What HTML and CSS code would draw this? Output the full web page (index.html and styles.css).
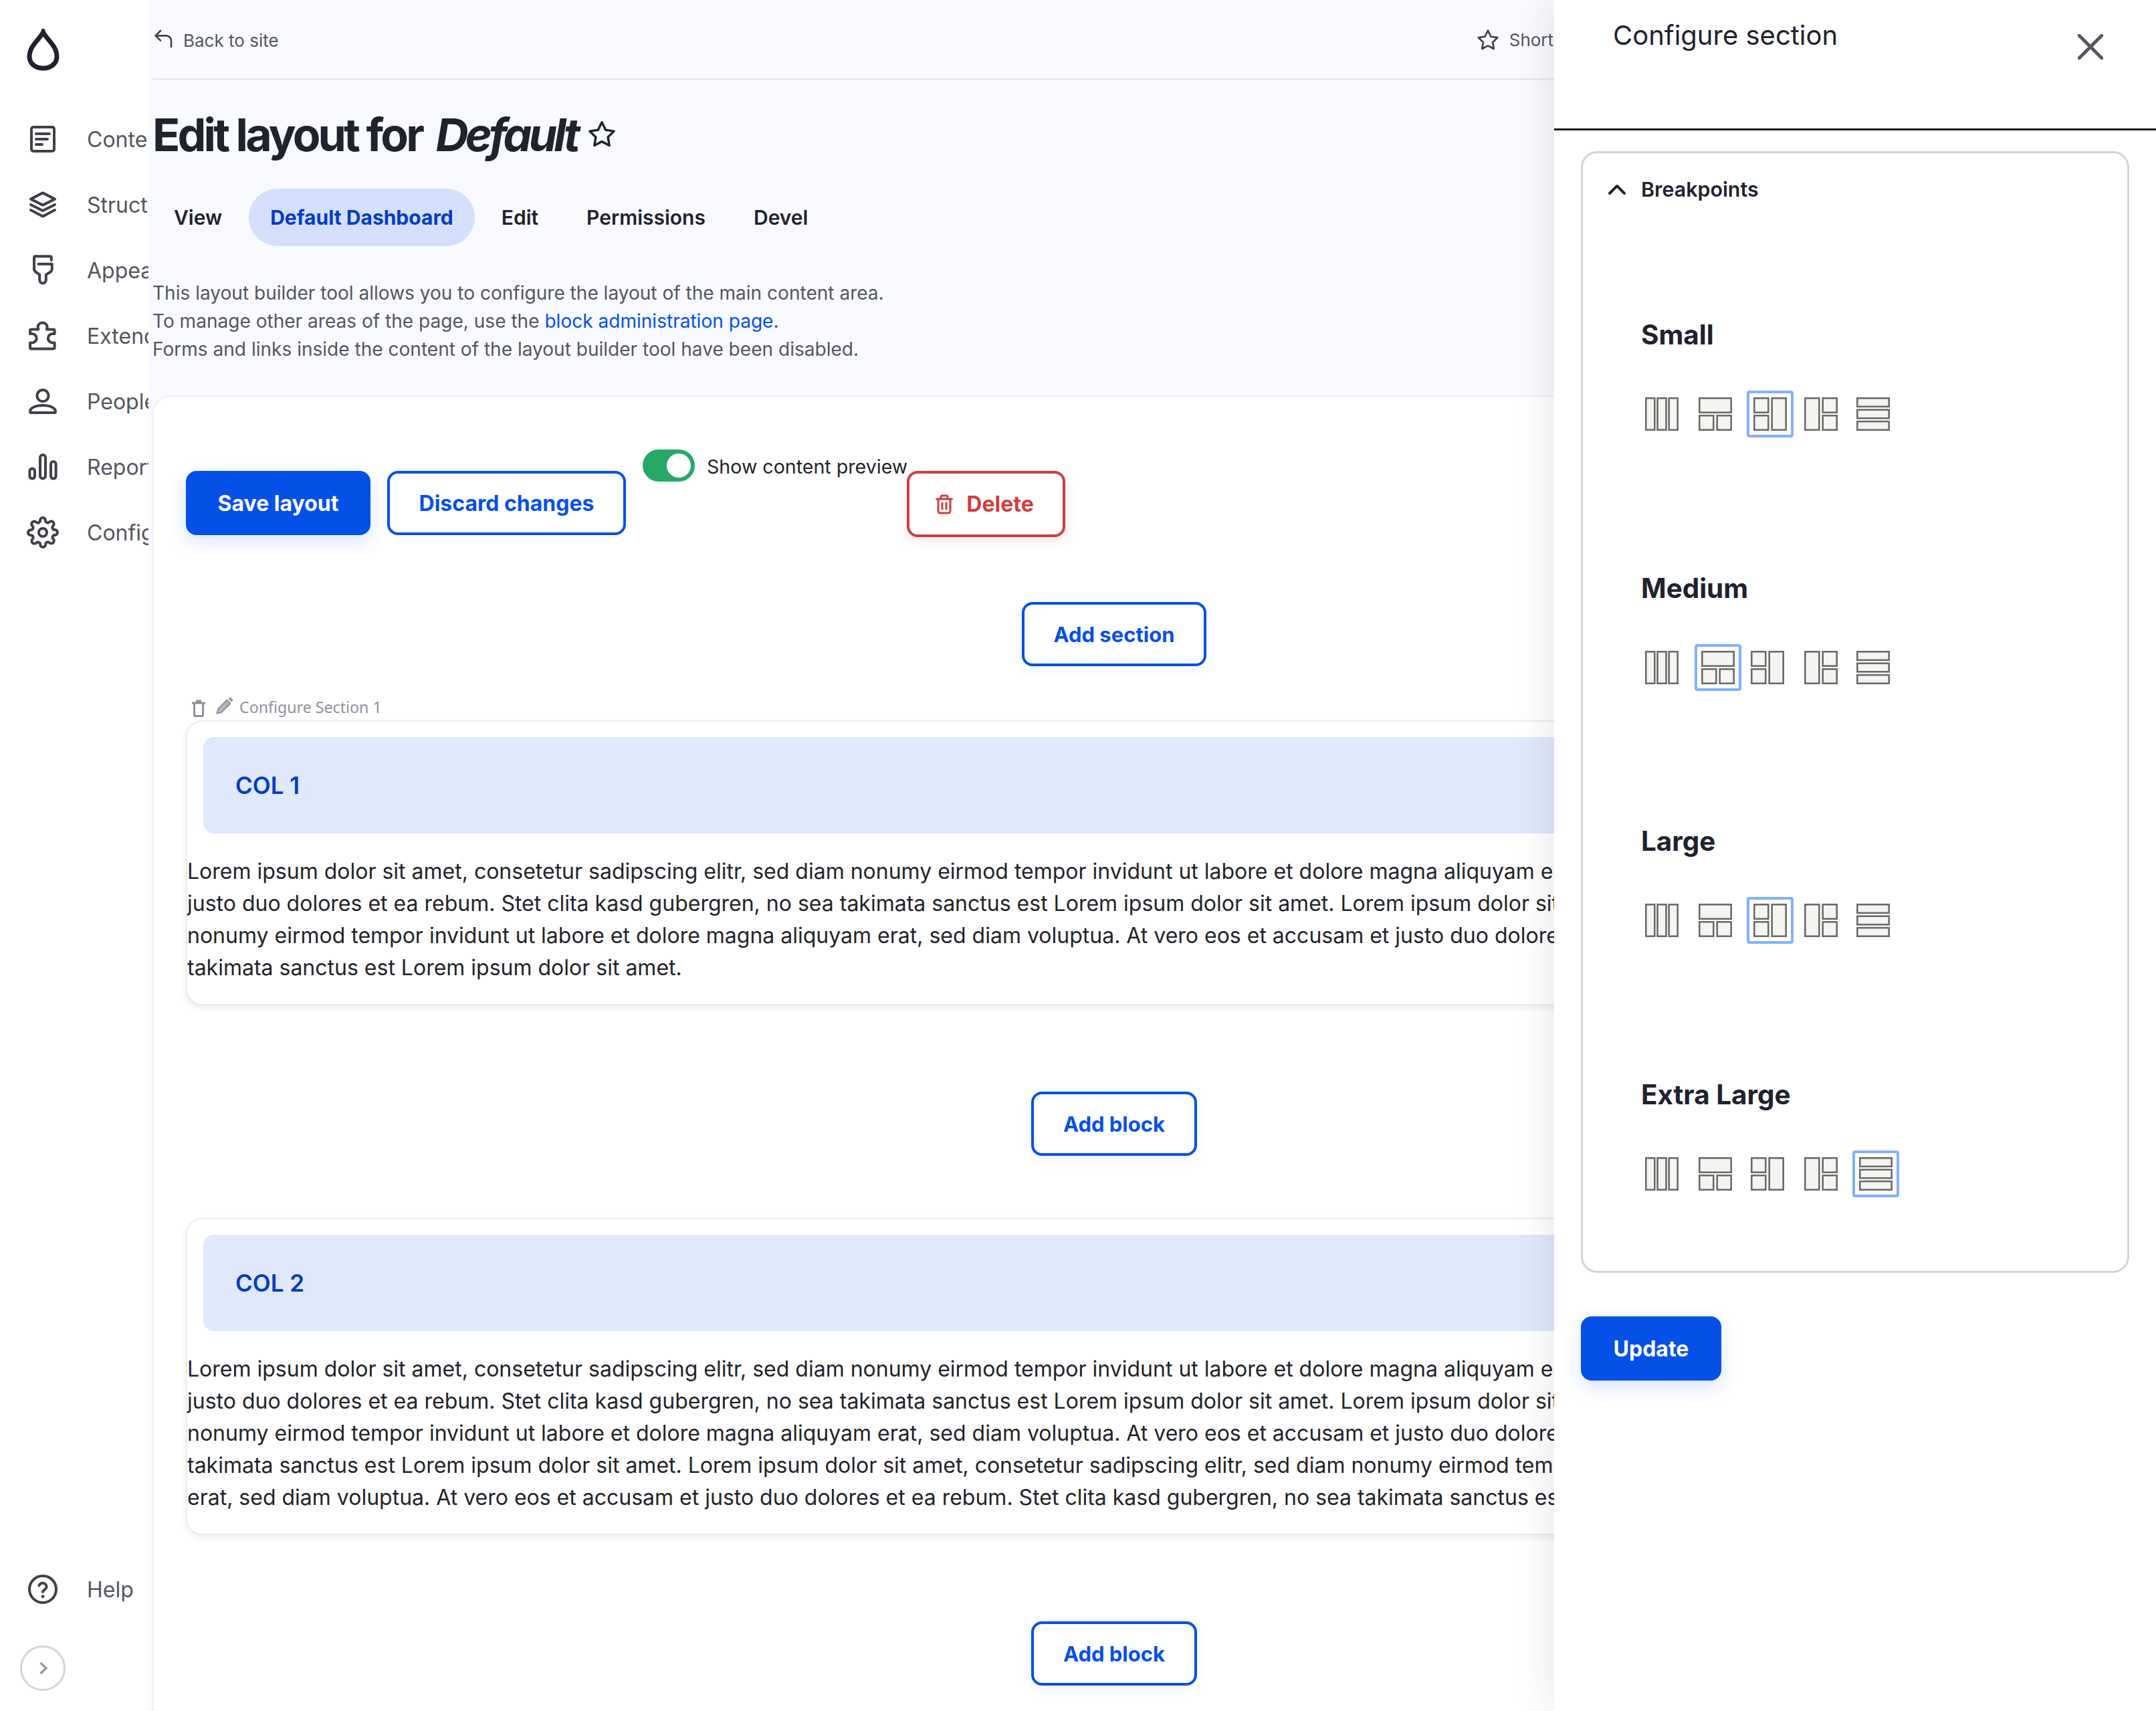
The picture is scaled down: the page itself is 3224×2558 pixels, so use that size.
FILE: index.html
```html
<!DOCTYPE html>
<html lang="en">
<head>
<meta charset="utf-8">
<title>Edit layout for Default</title>
<link rel="stylesheet" href="styles.css">
</head>
<body>
<svg class="defs" aria-hidden="true">
  <symbol id="l1" viewBox="0 0 50 50"><rect x="1.3" y="1.3" width="13" height="47.4"/><rect x="18.5" y="1.3" width="13" height="47.4"/><rect x="35.7" y="1.3" width="13" height="47.4"/></symbol>
  <symbol id="l2" viewBox="0 0 50 50"><rect x="1.3" y="1.3" width="47.4" height="21.4"/><rect x="1.3" y="27.3" width="21" height="21.4"/><rect x="27.7" y="27.3" width="21" height="21.4"/></symbol>
  <symbol id="l3" viewBox="0 0 50 50"><rect x="1.3" y="1.3" width="21" height="21.4"/><rect x="1.3" y="27.3" width="21" height="21.4"/><rect x="27.7" y="1.3" width="21" height="47.4"/></symbol>
  <symbol id="l4" viewBox="0 0 50 50"><rect x="1.3" y="1.3" width="21" height="47.4"/><rect x="27.7" y="1.3" width="21" height="21.4"/><rect x="27.7" y="27.3" width="21" height="21.4"/></symbol>
  <symbol id="l5" viewBox="0 0 50 50"><rect x="1.3" y="1.3" width="47.4" height="12.6"/><rect x="1.3" y="18.7" width="47.4" height="12.6"/><rect x="1.3" y="36.1" width="47.4" height="12.6"/></symbol>
</svg>
<div class="app">
  <aside class="sidebar">
    <svg class="logo" viewBox="0 0 49 63"><path d="M24.5 5C21 14 4 25 4 41.500C4 52 13 59 24.500 59S45 52 45 41.500C45 25 28 14 24.500 5Z"/></svg>
    <nav class="nav">
      <a class="nav-item"><svg class="nav-icon" viewBox="0 0 24 24"><rect x="3.500" y="3" width="17" height="18" rx="1.500"/><path d="M7 8h10M7 12h8.500M7 16h4.500"/></svg><span>Content</span></a>
      <a class="nav-item"><svg class="nav-icon" viewBox="0 0 24 24"><path d="M12 3.200 21 7.800 12 12.300 3 7.800ZM3 12l9 4.500 9-4.500M3 16l9 4.800 9-4.800"/></svg><span>Structure</span></a>
      <a class="nav-item"><svg class="nav-icon" viewBox="0 0 24 24"><path d="M18.400 4.500V2.600Q18.400 1.600 17.400 1.600H6.500Q5.500 1.600 5.500 2.600V11Q5.500 12.500 7 13.500L9.600 15.300V19.300a2.400 2.400 0 0 0 4.800 0V15.300L17.400 13.500Q18.900 12.500 18.900 11V7.400H8.700"/></svg><span>Appearance</span></a>
      <a class="nav-item"><svg class="nav-icon" viewBox="0 0 24 24"><path d="M3.500 7.200H8.500C9 7.200 8.300 6.200 8.300 5.500C8.300 3.500 10 2.200 11.800 2.200C13.600 2.200 15.300 3.500 15.300 5.500C15.300 6.200 14.600 7.200 15.100 7.200H19.800a1 1 0 0 1 1 1V10.500H19.300a3.300 3.300 0 0 0 0 6.700H20.800V20.800a1 1 0 0 1-1 1H3.500a1 1 0 0 1-1-1V17.200H4a3.300 3.300 0 0 0 0-6.700H2.500V8.200a1 1 0 0 1 1-1Z"/></svg><span>Extend</span></a>
      <a class="nav-item"><svg class="nav-icon" viewBox="0 0 24 24"><circle cx="12" cy="7.800" r="4.300"/><path d="M2.500 19.700c0-3 4.300-4.700 9.500-4.700s9.500 1.700 9.500 4.700c0 .6-.4.800-1 .8h-17c-.6 0-1-.2-1-.8Z"/></svg><span>People</span></a>
      <a class="nav-item"><svg class="nav-icon" viewBox="0 0 24 24"><rect x="2.200" y="13.200" width="3.800" height="7.600" rx="1.900"/><rect x="10" y="3" width="4" height="17.800" rx="2"/><rect x="18" y="8" width="3.800" height="12.800" rx="1.900"/></svg><span>Reports</span></a>
      <a class="nav-item"><svg class="nav-icon" viewBox="0 0 24 24"><path d="M12 15a3 3 0 1 0 0-6 3 3 0 0 0 0 6z"/><path d="M19.400 15a1.650 1.650 0 0 0 .33 1.820l.06.06a2 2 0 0 1 0 2.830 2 2 0 0 1-2.830 0l-.06-.06a1.650 1.650 0 0 0-1.820-.33 1.650 1.650 0 0 0-1 1.510V21a2 2 0 0 1-2 2 2 2 0 0 1-2-2v-.09A1.650 1.650 0 0 0 9 19.400a1.650 1.650 0 0 0-1.820.33l-.06.06a2 2 0 0 1-2.830 0 2 2 0 0 1 0-2.830l.06-.06a1.650 1.650 0 0 0 .33-1.820 1.650 1.650 0 0 0-1.510-1H3a2 2 0 0 1-2-2 2 2 0 0 1 2-2h.09A1.650 1.650 0 0 0 4.600 9a1.650 1.650 0 0 0-.33-1.820l-.06-.06a2 2 0 0 1 0-2.830 2 2 0 0 1 2.830 0l.06.06a1.650 1.650 0 0 0 1.820.33H9a1.650 1.650 0 0 0 1-1.510V3a2 2 0 0 1 2-2 2 2 0 0 1 2 2v.09a1.650 1.650 0 0 0 1 1.510 1.650 1.650 0 0 0 1.820-.33l.06-.06a2 2 0 0 1 2.830 0 2 2 0 0 1 0 2.830l-.06.06a1.650 1.650 0 0 0-.33 1.820V9a1.650 1.650 0 0 0 1.510 1H21a2 2 0 0 1 2 2 2 2 0 0 1-2 2h-.09a1.650 1.650 0 0 0-1.510 1z"/></svg><span>Configuration</span></a>
    </nav>
    <a class="nav-item help"><svg class="nav-icon" viewBox="0 0 24 24"><circle cx="12" cy="12" r="10"/><path d="M9.200 9.200a2.900 2.900 0 0 1 5.600 1c0 1.900-2.800 2.400-2.800 3.800"/><path class="dot" d="M12 17.400h.01"/></svg><span>Help</span></a>
    <button class="collapse"><svg viewBox="0 0 24 24"><path d="M8.500 4 17 12l-8.500 8"/></svg></button>
  </aside>

  <main class="main">
    <header class="topbar">
      <a class="top-link"><svg class="back-icon" viewBox="0 0 24 24"><path d="M9 14 3.500 8.500 9 3"/><path d="M21 21v-7a5.500 5.500 0 0 0-5.500-5.500h-12"/></svg>Back to site</a>
      <a class="top-link shortcuts"><svg class="short-icon" viewBox="0 0 24 24"><path d="M12 2.500l2.940 6 6.560.96-4.750 4.640 1.120 6.540L12 17.550l-5.870 3.090 1.120-6.540-4.750-4.640 6.560-.96Z"/></svg>Shortcuts</a>
    </header>
    <h1 class="page-title">Edit layout for <em>Default</em><svg class="title-star" viewBox="0 0 24 24"><path d="M12 2.500l2.940 6 6.560.96-4.750 4.640 1.120 6.540L12 17.550l-5.870 3.090 1.120-6.540-4.750-4.640 6.560-.96Z"/></svg></h1>
    <ul class="tabs">
      <li class="tab">View</li>
      <li class="tab active">Default Dashboard</li>
      <li class="tab">Edit</li>
      <li class="tab">Permissions</li>
      <li class="tab">Devel</li>
    </ul>
    <div class="intro">
      <p>This layout builder tool allows you to configure the layout of the main content area.</p>
      <p>To manage other areas of the page, use the <a>block administration page</a>.</p>
      <p>Forms and links inside the content of the layout builder tool have been disabled.</p>
    </div>

    <section class="canvas">
      <div class="actions">
        <button class="btn primary save">Save layout</button>
        <button class="btn outline discard">Discard changes</button>
        <span class="toggle"><span class="knob"></span></span>
        <span class="toggle-label">Show content preview</span>
        <button class="btn danger"><svg class="del-icon" viewBox="0 0 26 30"><path d="M1.500 7h23M8 6V4a2 2 0 0 1 2-2h6a2 2 0 0 1 2 2V6M4 7V25a3 3 0 0 0 3 3h12a3 3 0 0 0 3-3V7M10 13v9M16 13v9"/></svg>Delete</button>
      </div>
      <div class="add-row section-add"><button class="btn outline add add-section">Add section</button></div>
      <div class="section-tools">
        <svg class="tool-trash" viewBox="0 0 20 26"><path d="M0 5h20M6 2h8M3.500 5v18a1.500 1.500 0 0 0 1.500 1.500h10a1.500 1.500 0 0 0 1.500-1.500V5"/></svg>
        <svg class="tool-pencil" viewBox="0 0 26 26"><path class="pencil-body" d="M1.500 24.500l1.500-6.500L16.500 4.500l5 5L8 23Z"/><path class="pencil-cap" d="M18.500 2.500 20.500.800a1 1 0 0 1 1.300 0l3.400 3.400a1 1 0 0 1 0 1.300L23.500 7.500Z"/></svg>
        <span>Configure Section 1</span>
      </div>
      <article class="block">
        <h2 class="block-title">COL 1</h2>
        <p class="lorem">Lorem ipsum dolor sit amet, consetetur sadipscing elitr, sed diam nonumy eirmod tempor invidunt ut labore et dolore magna aliquyam erat, sed diam voluptua. At vero eos et accusam et justo duo dolores et ea rebum. Stet clita kasd gubergren, no sea takimata sanctus est Lorem ipsum dolor sit amet. Lorem ipsum dolor sit amet, consetetur sadipscing elitr, sed diam nonumy eirmod tempor invidunt ut labore et dolore magna aliquyam erat, sed diam voluptua. At vero eos et accusam et justo duo dolores et ea rebum. Stet clita kasd gubergren, no sea takimata sanctus est Lorem ipsum dolor sit amet.</p>
      </article>
      <div class="add-row block-add"><button class="btn outline add add-block">Add block</button></div>
      <article class="block second">
        <h2 class="block-title">COL 2</h2>
        <p class="lorem">Lorem ipsum dolor sit amet, consetetur sadipscing elitr, sed diam nonumy eirmod tempor invidunt ut labore et dolore magna aliquyam erat, sed diam voluptua. At vero eos et accusam et justo duo dolores et ea rebum. Stet clita kasd gubergren, no sea takimata sanctus est Lorem ipsum dolor sit amet. Lorem ipsum dolor sit amet, consetetur sadipscing elitr, sed diam nonumy eirmod tempor invidunt ut labore et dolore magna aliquyam erat, sed diam voluptua. At vero eos et accusam et justo duo dolores et ea rebum. Stet clita kasd gubergren, no sea takimata sanctus est Lorem ipsum dolor sit amet. Lorem ipsum dolor sit amet, consetetur sadipscing elitr, sed diam nonumy eirmod tempor invidunt ut labore et dolore magna aliquyam erat, sed diam voluptua. At vero eos et accusam et justo duo dolores et ea rebum. Stet clita kasd gubergren, no sea takimata sanctus est Lorem ipsum dolor sit amet.</p>
      </article>
      <div class="add-row last-add"><button class="btn outline add add-block">Add block</button></div>
    </section>
  </main>

  <aside class="panel">
    <header class="panel-head">
      <h2>Configure section</h2>
      <svg class="close" viewBox="0 0 38 38"><path d="M2 2l34 34M36 2 2 36"/></svg>
    </header>
    <div class="details">
      <div class="summary"><svg class="chev" viewBox="0 0 26 16"><path d="M2 14 13 3l11 11"/></svg>Breakpoints</div>
      <div class="bp-list">
        <div class="bp">
          <h3>Small</h3>
          <div class="layouts">
            <span class="lay"><svg><use href="#l1"/></svg></span>
            <span class="lay"><svg><use href="#l2"/></svg></span>
            <span class="lay sel"><svg><use href="#l3"/></svg></span>
            <span class="lay"><svg><use href="#l4"/></svg></span>
            <span class="lay"><svg><use href="#l5"/></svg></span>
          </div>
        </div>
        <div class="bp">
          <h3>Medium</h3>
          <div class="layouts">
            <span class="lay"><svg><use href="#l1"/></svg></span>
            <span class="lay sel"><svg><use href="#l2"/></svg></span>
            <span class="lay"><svg><use href="#l3"/></svg></span>
            <span class="lay"><svg><use href="#l4"/></svg></span>
            <span class="lay"><svg><use href="#l5"/></svg></span>
          </div>
        </div>
        <div class="bp">
          <h3>Large</h3>
          <div class="layouts">
            <span class="lay"><svg><use href="#l1"/></svg></span>
            <span class="lay"><svg><use href="#l2"/></svg></span>
            <span class="lay sel"><svg><use href="#l3"/></svg></span>
            <span class="lay"><svg><use href="#l4"/></svg></span>
            <span class="lay"><svg><use href="#l5"/></svg></span>
          </div>
        </div>
        <div class="bp">
          <h3>Extra Large</h3>
          <div class="layouts">
            <span class="lay"><svg><use href="#l1"/></svg></span>
            <span class="lay"><svg><use href="#l2"/></svg></span>
            <span class="lay"><svg><use href="#l3"/></svg></span>
            <span class="lay"><svg><use href="#l4"/></svg></span>
            <span class="lay sel"><svg><use href="#l5"/></svg></span>
          </div>
        </div>
      </div>
    </div>
    <button class="btn primary update">Update</button>
  </aside>
</div>
</body>
</html>
```
FILE: styles.css
```css
* { box-sizing: border-box; }
html, body { margin: 0; padding: 0; }
body {
  font-family: Inter, "Liberation Sans", sans-serif;
  color: #20222e;
  background: #fff;
}
h1, h2, h3, p, ul { margin: 0; padding: 0; }
ul { list-style: none; }
.defs { display: none; }
.app { display: flex; width: 3224px; height: 2558px; overflow: hidden; }

/* sidebar */
.sidebar {
  flex: none; width: 222px; height: 100%;
  display: flex; flex-direction: column;
  background: #fff; overflow: hidden; position: relative; z-index: 1;
}
.logo { display: block; width: 49px; height: 63px; margin: 43px 0 0 40px; flex: none; }
.logo path { fill: none; stroke: #20222e; stroke-width: 7; }
.nav { margin-top: 53px; }
.nav-item {
  display: flex; align-items: center; height: 98px;
  font-size: 32px; color: #55565f; white-space: nowrap;
}
.nav-icon {
  flex: none; width: 48px; height: 48px; margin: 0 42px 0 40px;
  fill: none; stroke: #3f4048; stroke-width: 2; stroke-linecap: round; stroke-linejoin: round;
}
.nav-icon .dot { stroke-width: 2.400; }
.help { margin-top: auto; }
.collapse {
  width: 68px; height: 68px; margin: 35px 0 30px 30px; padding: 0;
  border: 3px solid #d3d4d9; border-radius: 50%; background: #fff;
  display: flex; align-items: center; justify-content: center; flex: none;
}
.collapse svg { width: 24px; height: 24px; fill: none; stroke: #9a9a9a; stroke-width: 3.500; }

/* main */
.main { flex: none; width: 2102px; height: 100%; background: #f9faff; padding-left: 6px; overflow: hidden; }
.topbar {
  height: 120px; border-bottom: 3px solid #e6e7ec;
  display: flex; justify-content: space-between;
}
.top-link { display: flex; align-items: center; padding-top: 4px; font-size: 26px; color: #55565f; white-space: nowrap; }
.back-icon { width: 32px; height: 32px; margin: -6px 14px 0 0; fill: none; stroke: #3f4048; stroke-width: 2; stroke-linecap: round; stroke-linejoin: round; }
.shortcuts { margin-right: -51px; margin-top: -2px; }
.short-icon { width: 36px; height: 36px; margin-right: 14px; fill: none; stroke: #3f4048; stroke-width: 1.800; stroke-linejoin: round; }
.page-title {
  display: flex; align-items: center; height: 84px; margin-top: 38px; padding-top: 1px;
  font-size: 68px; font-weight: 650; letter-spacing: -3.800px; white-space: pre;
  color: #20222e;
}
.page-title em { font-style: italic; margin-left: 8px; letter-spacing: -4.800px; }
.title-star { width: 46px; height: 46px; margin-left: 14px; fill: none; stroke: #20222e; stroke-width: 1.800; stroke-linejoin: round; }
.tabs { display: flex; gap: 8px; margin: 40px 0 0; }
.tab {
  height: 86px; padding: 0 32px; border-radius: 43px;
  display: flex; align-items: center;
  font-size: 30px; font-weight: 600; color: #20222e; white-space: nowrap;
}
.tab.active { background: #d3dffb; color: #003cc5; font-weight: 700; }
.intro { margin-top: 49px; font-size: 28.050px; line-height: 42px; color: #55565f; }
.intro a { color: #0550e6; }

/* canvas */
.canvas {
  width: 2875px; height: 2200px; margin-top: 48px; padding: 79px 48px 0;
  background: #fff; border: 2px solid #eceef4; border-width: 2px 0 0 2px;
  border-radius: 28px 0 0 0;
}
.btn {
  font-family: inherit; font-size: 32px; font-weight: 650; height: 96px;
  border-radius: 16px; display: inline-flex; align-items: center; justify-content: center;
  background: #fff; padding: 0; white-space: nowrap; flex: none;
}
.primary { background: #0550e6; color: #fff; border: 0; box-shadow: 0 10px 28px rgba(5, 80, 230, .16); }
.outline { color: #0550e6; border: 4px solid #0550e6; }
.danger { color: #cf3e3e; border: 4px solid #cf3e3e; width: 237px; height: 99px; margin-top: 32px; padding-right: 4px; box-shadow: 0 6px 18px rgba(209, 60, 60, .12); }
.actions { display: flex; align-items: flex-start; }
.save { width: 276px; margin-top: 32px; }
.discard { width: 357px; margin: 32px 0 0 25px; }
.toggle { flex: none; width: 78px; height: 48px; margin-left: 25px; border-radius: 24px; background: #27a866; display: flex; align-items: center; justify-content: flex-end; padding-right: 6px; }
.knob { width: 36px; height: 36px; border-radius: 50%; background: #fff; }
.toggle-label { flex: none; width: 299px; margin-left: 18px; font-size: 28.600px; line-height: 52px; color: #232429; white-space: nowrap; }
.del-icon { width: 26px; height: 30px; margin-right: 20px; fill: none; stroke: #cf3e3e; stroke-width: 3; stroke-linecap: round; stroke-linejoin: round; }
.add-row { display: flex; justify-content: center; width: 2776px; }
.section-add { margin-top: 97px; }
.add { font-size: 31px; font-weight: 700; box-shadow: 0 6px 18px rgba(5, 80, 230, .06); }
.add-section { width: 276px; }
.add-block { width: 248px; }
.section-tools { display: flex; align-items: center; height: 30px; margin: 46px 0 5px 9px; color: #8d919c; font-family: "Noto Sans", sans-serif; font-size: 23.200px; }
.tool-trash { width: 20px; height: 26px; margin: 4px 16px 0 0; fill: none; stroke: #8d919c; stroke-width: 3; }
.tool-pencil { width: 26px; height: 26px; margin: -4px 9px 0 0; }
.pencil-body { fill: #b4b7bf; stroke: #8d919c; stroke-width: 2; stroke-linejoin: round; }
.pencil-cap { fill: #8d919c; }
.block {
  width: 2777px; padding: 23px 0 30px; background: #fff;
  border: 2px solid #ecedef; border-radius: 24px;
  box-shadow: 0 4px 10px rgba(30, 30, 50, .08);
}
.block-title {
  margin: 0 22px 0 24px; height: 144px; padding-left: 48px; border-radius: 16px;
  background: #e0e8fb; color: #003cc5;
  display: flex; align-items: center; font-size: 35px; font-weight: 600;
}
.lorem { margin: 33px -50px 0 0; font-size: 32px; line-height: 48px; color: #232429; }
.block-add { margin-top: 129px; }
.second { margin-top: 93px; }
.last-add { margin-top: 129px; }

/* panel */
.panel {
  flex: none; width: 900px; height: 100%; background: #fff; position: relative; z-index: 2;
  box-shadow: 0 0 60px rgba(30, 30, 60, .12);
}
.panel-head { height: 195px; border-bottom: 3px solid #1a1a1a; display: flex; align-items: flex-start; justify-content: space-between; padding: 28px 79px 0 88px; }
.panel-head h2 { font-size: 40px; font-weight: 400; line-height: 50px; color: #20222e; }
.close { width: 38px; height: 38px; margin-top: 23px; fill: none; stroke: #55565f; stroke-width: 5; stroke-linecap: round; }
.details { width: 820px; height: 1677px; margin: 31px 0 0 40px; padding: 30px 0 0; border: 3px solid #d3d4d9; border-radius: 24px; }
.summary { display: flex; align-items: center; height: 48px; padding-left: 38px; font-size: 30.400px; font-weight: 600; color: #20222e; }
.chev { width: 26px; height: 16px; margin-right: 23px; fill: none; stroke: #20222e; stroke-width: 4; stroke-linecap: round; stroke-linejoin: round; }
.bp-list { margin-top: 170px; padding-left: 87px; }
.bp { height: 378.670px; }
.bp h3 { font-size: 40.400px; font-weight: 650; line-height: 48px; color: #20222e; }
.layouts { display: grid; grid-template-columns: 80px 78px 80px 78px 70px; margin: 69px 0 0 6px; height: 50px; align-items: start; }
.lay { display: block; width: 50px; height: 50px; }
.lay svg { display: block; width: 50px; height: 50px; fill: #f4f5f0; stroke: #6b6b6b; stroke-width: 2.600; }
.lay.sel { width: 70px; height: 70px; margin: -10px 0 0 -6px; padding: 6px; border: 4px solid #7fb2ff; border-radius: 4px; }
.update { display: flex; width: 210px; margin: 65px 0 0 40px; }
```
